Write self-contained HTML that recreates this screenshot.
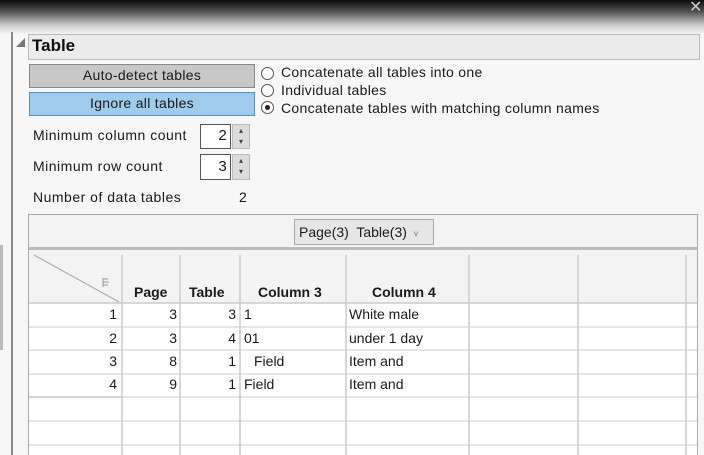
<!DOCTYPE html>
<html><head><style>
*{margin:0;padding:0;box-sizing:border-box}
body{width:704px;height:455px;overflow:hidden;background:#f7f7f7;font-family:"Liberation Sans",sans-serif;position:relative;color:#1a1a1a}
.a{position:absolute}
.t{font-size:14px;white-space:nowrap;letter-spacing:0.3px}
.rad{position:absolute;width:13px;height:13px;border:1px solid #555;border-radius:50%;background:#fff}
.cell{position:absolute;font-size:14px;white-space:nowrap}
.sp{position:absolute;width:18px;background:#dcdcdc;border:1px solid #bbb;font-size:8px;color:#444;text-align:center;line-height:11px}
</style></head><body>
<div class="a" style="left:0;top:0;width:704px;height:34px;background:linear-gradient(#0a0a0a 0%,#555 35%,#cfcfcf 75%,#f4f4f4 100%)"></div>
<div class="a t" style="left:689px;top:-3px;color:#ccc;font-size:16px">✕</div>
<div class="a" style="left:11px;top:32px;width:2px;height:423px;background:#888"></div>
<div class="a" style="left:0;top:245px;width:3px;height:105px;background:#bbb"></div>
<div class="a" style="left:16px;top:38px;width:0;height:0;border-left:9px solid transparent;border-bottom:9px solid #777"></div>
<div class="a" style="left:28px;top:34px;width:672px;height:26px;border:1px solid #bbb;background:#ececec"></div>
<div class="a" style="left:32px;top:36px;font-size:17px;font-weight:bold;color:#111">Table</div>
<div class="a" style="left:29px;top:64px;width:226px;height:24px;background:#c8c8c8;border:1px solid #888"></div>
<div class="a t" style="left:29px;top:67px;width:226px;text-align:center">Auto-detect tables</div>
<div class="a" style="left:29px;top:92px;width:226px;height:24px;background:#9fcbec;border:1px solid #5a8fbf"></div>
<div class="a t" style="left:29px;top:95px;width:226px;text-align:center">Ignore all tables</div>
<div class="rad" style="left:261px;top:67px"></div>
<div class="rad" style="left:261px;top:84px"></div>
<div class="rad" style="left:261px;top:101px"></div>
<div class="a" style="left:265px;top:105px;width:5px;height:5px;border-radius:50%;background:#222"></div>
<div class="a t" style="left:281px;top:64px">Concatenate all tables into one</div>
<div class="a t" style="left:281px;top:82px">Individual tables</div>
<div class="a t" style="left:281px;top:100px">Concatenate tables with matching column names</div>
<div class="a t" style="left:33px;top:127px;letter-spacing:0.5px">Minimum column count</div>
<div class="a t" style="left:33px;top:158px;letter-spacing:0.5px">Minimum row count</div>
<div class="a t" style="left:33px;top:189px;letter-spacing:0.5px">Number of data tables</div>
<div class="a t" style="left:239px;top:189px">2</div>
<div class="a" style="left:200px;top:124px;width:31px;height:25px;border:1px solid #555;background:#fff"></div>
<div class="a t" style="left:200px;top:127px;width:27px;text-align:right;font-size:15px">2</div>
<div class="sp" style="left:232px;top:124px;height:25px">▴<br>▾</div>
<div class="a" style="left:200px;top:154px;width:31px;height:26px;border:1px solid #555;background:#fff"></div>
<div class="a t" style="left:200px;top:158px;width:27px;text-align:right;font-size:15px">3</div>
<div class="sp" style="left:232px;top:154px;height:26px">▴<br>▾</div>
<div class="a" style="left:28px;top:214px;width:670px;height:241px;border:1px solid #aaa;background:#f3f3f3"></div>
<div class="a" style="left:29px;top:247px;width:668px;height:3px;background:#bbb"></div>
<div class="a" style="left:294px;top:219px;width:140px;height:26px;border:1px solid #aaa;background:#e6e6e6"></div>
<div class="a t" style="left:299px;top:224px;letter-spacing:0">Page(3)&nbsp; Table(3) <span style="font-size:9px;color:#777">&nbsp;˅</span></div>
<svg class="a" style="left:29px;top:250px" width="668" height="205">
<rect x="0" y="0" width="668" height="205" fill="#fff"/>
<rect x="0" y="0" width="668" height="53" fill="#f3f3f3"/>
<line x1="5" y1="5" x2="90" y2="52" stroke="#aaa"/>
<g stroke="#ddd" stroke-width="1.5">
<line x1="0" y1="77" x2="668" y2="77"/><line x1="0" y1="100" x2="668" y2="100"/><line x1="0" y1="124" x2="668" y2="124"/><line x1="0" y1="147" x2="668" y2="147"/><line x1="0" y1="171" x2="668" y2="171"/><line x1="0" y1="195" x2="668" y2="195"/>
</g>
<g stroke="#ccc" stroke-width="1.5"><line x1="0" y1="53" x2="668" y2="53"/><line x1="0" y1="147" x2="93" y2="147"/></g>
<g stroke="#ccc" stroke-width="1.5">
<line x1="93" y1="5" x2="93" y2="205"/><line x1="151" y1="5" x2="151" y2="205"/><line x1="211" y1="5" x2="211" y2="205"/><line x1="317" y1="5" x2="317" y2="205"/><line x1="440" y1="5" x2="440" y2="205"/><line x1="549" y1="5" x2="549" y2="205"/><line x1="657" y1="5" x2="657" y2="205"/>
</g>
<g stroke="#999"><line x1="74" y1="28" x2="74" y2="37"/><line x1="74" y1="29" x2="79" y2="29"/><line x1="74" y1="32" x2="80" y2="32"/><line x1="74" y1="35" x2="79" y2="35"/></g>
</svg>
<div class="cell" style="left:134px;top:284px;font-weight:bold">Page</div>
<div class="cell" style="left:189px;top:284px;font-weight:bold">Table</div>
<div class="cell" style="left:258px;top:284px;font-weight:bold">Column 3</div>
<div class="cell" style="left:372px;top:284px;font-weight:bold">Column 4</div>
<div class="cell" style="left:100px;top:306px;width:17px;text-align:right">1</div>
<div class="cell" style="left:100px;top:330px;width:17px;text-align:right">2</div>
<div class="cell" style="left:100px;top:353px;width:17px;text-align:right">3</div>
<div class="cell" style="left:100px;top:376px;width:17px;text-align:right">4</div>
<div class="cell" style="left:150px;top:306px;width:27px;text-align:right">3</div>
<div class="cell" style="left:150px;top:330px;width:27px;text-align:right">3</div>
<div class="cell" style="left:150px;top:353px;width:27px;text-align:right">8</div>
<div class="cell" style="left:150px;top:376px;width:27px;text-align:right">9</div>
<div class="cell" style="left:200px;top:306px;width:36px;text-align:right">3</div>
<div class="cell" style="left:200px;top:330px;width:36px;text-align:right">4</div>
<div class="cell" style="left:200px;top:353px;width:36px;text-align:right">1</div>
<div class="cell" style="left:200px;top:376px;width:36px;text-align:right">1</div>
<div class="cell" style="left:244px;top:306px">1</div>
<div class="cell" style="left:244px;top:330px">01</div>
<div class="cell" style="left:254px;top:353px">Field</div>
<div class="cell" style="left:244px;top:376px">Field</div>
<div class="cell" style="left:349px;top:306px">White male</div>
<div class="cell" style="left:349px;top:330px">under 1 day</div>
<div class="cell" style="left:349px;top:353px">Item and</div>
<div class="cell" style="left:349px;top:376px">Item and</div>
</body></html>
